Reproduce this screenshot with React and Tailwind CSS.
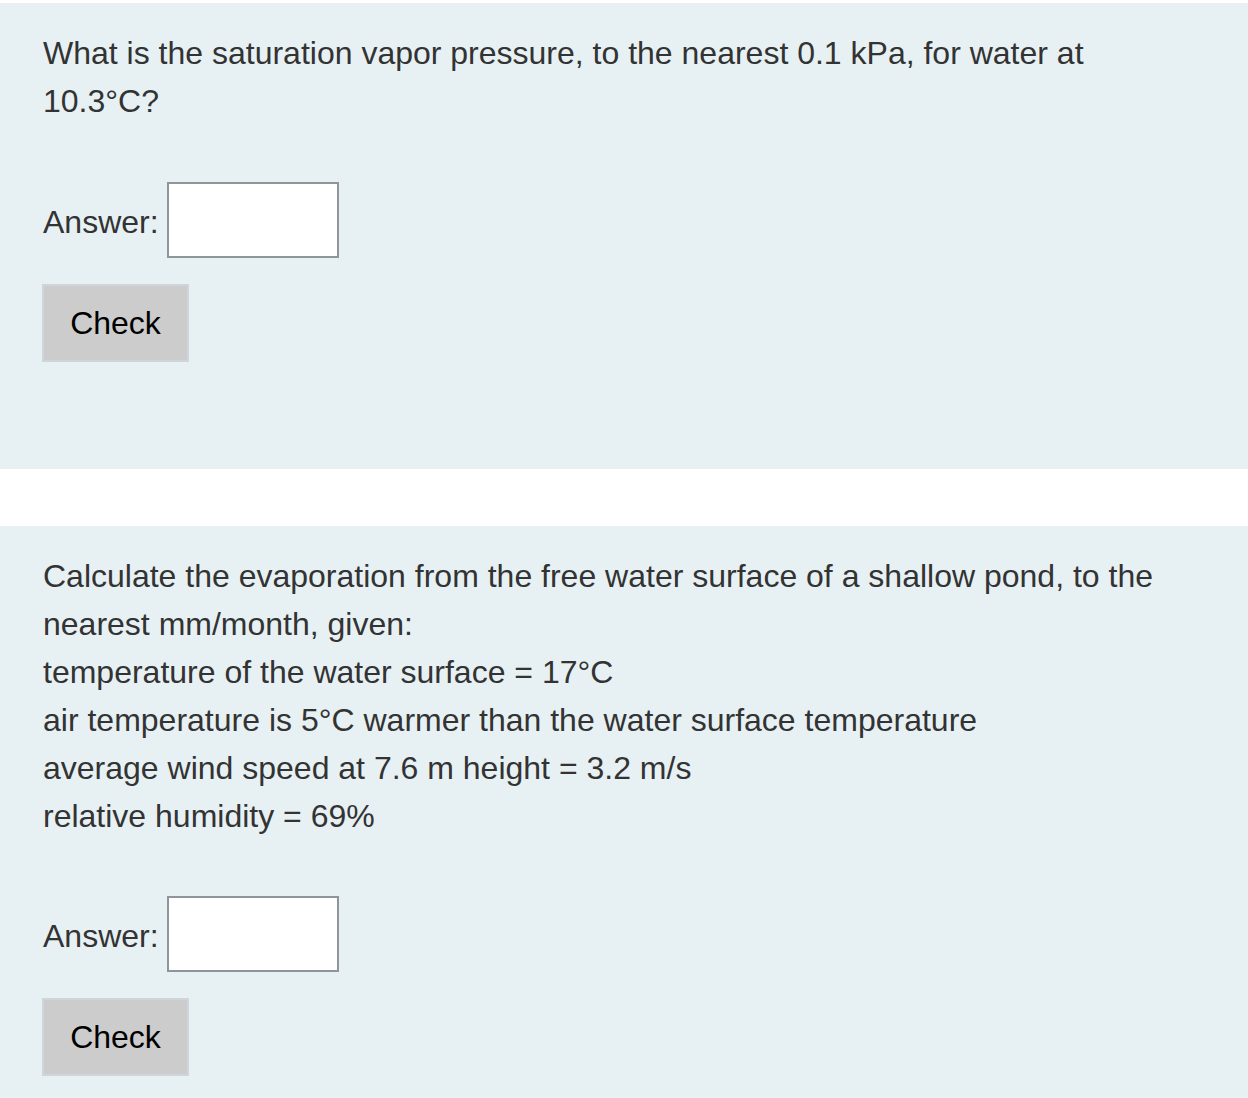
export default function App() {
  const panel = 'bg-[#e7f1f4] pl-[43px] pr-[63px] pt-[26px]'

  const AnswerRow = ({ mt }) => (
    <div className={`flex items-center ${mt}`}>
      <label className="mr-[8px] pt-[3px]">Answer:</label>
      <input
        type="text"
        className="w-[172px] h-[76px] bg-white border-2 border-[#8f959c] outline-none"
      />
    </div>
  )

  const CheckButton = () => (
    <button className="mt-[26px] -ml-px w-[147px] h-[78px] bg-[#cccccc] border-2 border-[#d0d5da] text-black text-[32px] flex items-center justify-center">
      Check
    </button>
  )

  return (
    <div
      className="bg-white pt-[3px] text-[32px] leading-[48px] text-[#333333]"
      style={{ fontFamily: '"Liberation Sans", Arial, Helvetica, sans-serif' }}
    >
      <div className={`${panel} pb-[107px]`}>
        <p>
          What is the saturation vapor pressure, to the nearest 0.1 kPa, for
          water at 10.3°C?
        </p>
        <AnswerRow mt="mt-[57px]" />
        <CheckButton />
      </div>

      <div className={`${panel} pb-[22px] mt-[57px]`}>
        <p>
          Calculate the evaporation from the free water surface of a shallow
          pond, to the nearest mm/month, given:
          <br />
          temperature of the water surface = 17°C
          <br />
          air temperature is 5°C warmer than the water surface temperature
          <br />
          average wind speed at 7.6 m height = 3.2 m/s
          <br />
          relative humidity = 69%
        </p>
        <AnswerRow mt="mt-[56px]" />
        <CheckButton />
      </div>
    </div>
  )
}
